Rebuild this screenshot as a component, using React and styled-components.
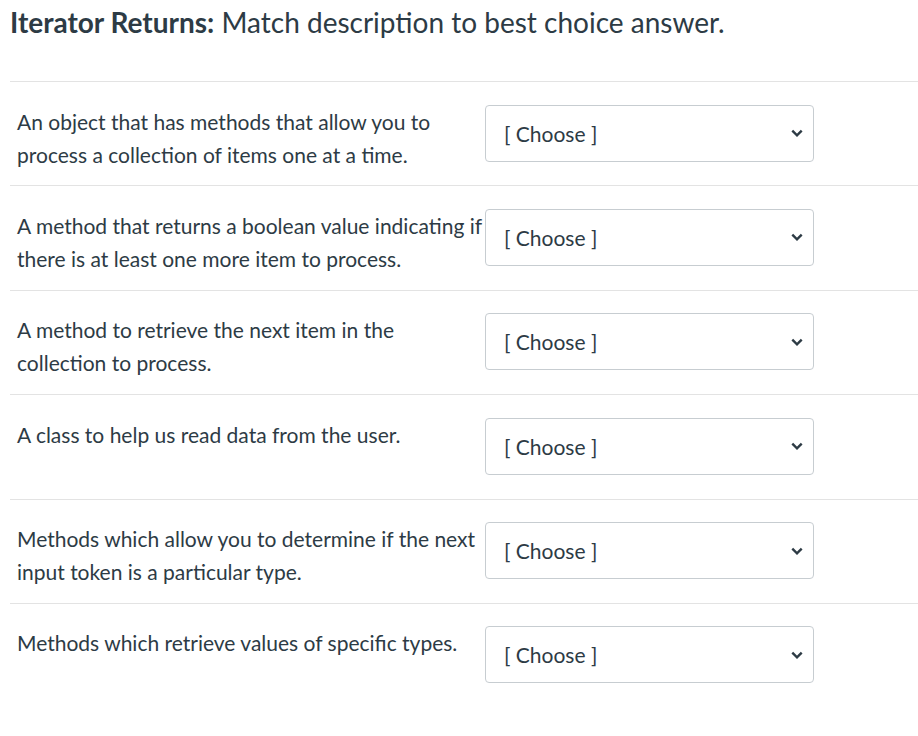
import React from "react";
import styled, { createGlobalStyle } from "styled-components";

const colors = {
  text: "#2d3b45",
  divider: "#e3e3e3",
  border: "#c7cdd1",
  white: "#ffffff",
};

const GlobalStyle = createGlobalStyle`
  body {
    margin: 0;
    background: ${colors.white};
    font-family: Lato, "Noto Sans", sans-serif;
    color: ${colors.text};
  }
`;

const Page = styled.div`
  padding: 0 0 0 10px;
`;

const Title = styled.h2`
  margin: 0;
  padding-top: 4px;
  height: 77px;
  font-size: 28px;
  font-weight: 400;
  line-height: 36px;
  b {
    font-weight: 700;
  }
`;

const Row = styled.div`
  box-sizing: border-box;
  display: flex;
  align-items: flex-start;
  height: 104.4px;
  border-top: 1px solid ${colors.divider};
  padding: 22.5px 0 0 7px;
`;

const Question = styled.div`
  width: 468px;
  flex-shrink: 0;
  font-size: 21px;
  line-height: 33px;
`;

const Select = styled.div`
  box-sizing: border-box;
  width: 329px;
  height: 57px;
  border: 1px solid ${colors.border};
  border-radius: 4px;
  display: flex;
  align-items: center;
  justify-content: space-between;
  padding: 0 9px 0 18px;
  font-size: 21px;
`;

const Chevron = () => (
  <svg width="14" height="14" viewBox="0 0 14 14">
    <path d="M2.3 4.6 L7 9.3 L11.7 4.6" fill="none" stroke={colors.text} strokeWidth="2.4" />
  </svg>
);

const rows = [
  "An object that has methods that allow you to process a collection of items one at a time.",
  "A method that returns a boolean value indicating if there is at least one more item to process.",
  "A method to retrieve the next item in the collection to process.",
  "A class to help us read data from the user.",
  "Methods which allow you to determine if the next input token is a particular type.",
  "Methods which retrieve values of specific types.",
];

export default function App() {
  return (
    <>
      <GlobalStyle />
      <Page>
        <Title>
          <b>Iterator Returns:</b> Match description to best choice answer.
        </Title>
        {rows.map((q, i) => (
          <Row key={i}>
            <Question>{q}</Question>
            <Select>
              <span>[ Choose ]</span>
              <Chevron />
            </Select>
          </Row>
        ))}
      </Page>
    </>
  );
}
